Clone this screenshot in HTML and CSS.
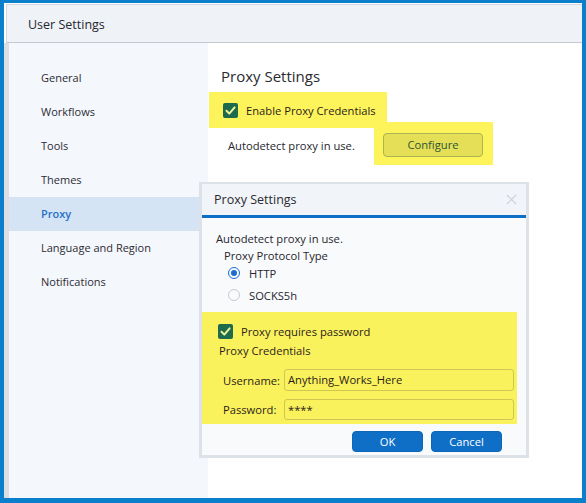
FILE: index.html
```html
<!DOCTYPE html>
<html>
<head>
    <title>User Settings</title>
    <link rel="stylesheet" href="styles.css">
</head>
<body>
    <div class="screen">
    <div class="window">
        <div class="titlebar">User Settings</div>
        <div class="content">
            <div class="sidebar">
                <div class="nav-item">General</div>
                <div class="nav-item">Workflows</div>
                <div class="nav-item">Tools</div>
                <div class="nav-item">Themes</div>
                <div class="nav-item selected">Proxy</div>
                <div class="nav-item">Language and Region</div>
                <div class="nav-item">Notifications</div>
            </div>
            <div class="panel">
                <div class="panel-title">Proxy Settings</div>
                <div class="mark enable-row">
                    <span class="check"><svg width="15" height="15" viewBox="0 0 15 15"><path d="M3.5 7.8 L6.3 10.6 L11.6 4.4" fill="none" stroke="#eef39a" stroke-width="2" stroke-linecap="round" stroke-linejoin="round"/></svg></span>
                    Enable Proxy Credentials
                </div>
                <div class="detect-row">
                    <span class="detect-text">Autodetect proxy in use.</span>
                    <div class="mark configure-wrap">
                        <div class="configure">Configure</div>
                    </div>
                </div>
            </div>
        </div>

        <!-- dialog sits over the settings window -->
        <div class="dialog">
            <div class="dialog-head">
                <span>Proxy Settings</span>
                <svg class="close" width="11" height="11" viewBox="0 0 11 11"><path d="M1 1 L10 10 M10 1 L1 10" stroke="#cdd1d9" stroke-width="1.2"/></svg>
            </div>
            <div class="dialog-bar"></div>
            <div class="dialog-body">
                <div class="line">Autodetect proxy in use.</div>
                <div class="line sub">Proxy Protocol Type</div>
                <div class="radio-row first"><span class="radio on"></span>HTTP</div>
                <div class="radio-row"><span class="radio"></span>SOCKS5h</div>

                <div class="mark creds">
                    <div class="pw-row">
                        <span class="check"><svg width="15" height="15" viewBox="0 0 15 15"><path d="M3.5 7.8 L6.3 10.6 L11.6 4.4" fill="none" stroke="#eef39a" stroke-width="2" stroke-linecap="round" stroke-linejoin="round"/></svg></span>
                        Proxy requires password
                    </div>
                    <div class="line creds-title">Proxy Credentials</div>
                    <div class="field first">
                        <span class="field-label">Username:</span>
                        <div class="input">Anything_Works_Here</div>
                    </div>
                    <div class="field">
                        <span class="field-label">Password:</span>
                        <div class="input pass">****</div>
                    </div>
                </div>

                <div class="buttons">
                    <div class="btn">OK</div>
                    <div class="btn">Cancel</div>
                </div>
            </div>
        </div>
    </div>
    </div>
</body>
</html>
```

FILE: styles.css
```css
body {
    margin: 0;
    font-family: "Open Sans", "Noto Sans", sans-serif;
    color: #26262e;
}
.screen {
    background-color: #0a7fcc;
    padding: 3px 4px 5px 4px;
    width: 578px;
    height: 495px;
}
.window {
    position: relative;
    height: 495px;
    background-color: #fff;
    padding-top: 1px;
    box-sizing: border-box;
    display: flex;
    flex-direction: column;
}
.titlebar {
    margin-left: 2px;
    height: 37px;
    border-top: 1px solid #d3d6dd;
    border-bottom: 1px solid #c6c9d0;
    border-left: 1px solid #d3d6dd;
    background-color: #eff2f7;
    font-size: 12.5px;
    line-height: 40px;
    padding-left: 21px;
}
.content {
    flex: 1;
    display: flex;
    border-left: 5px solid #dcdee3;
}
.sidebar {
    width: 199px;
    background-color: #f4f7fb;
    padding-top: 18px;
}
.nav-item {
    height: 34px;
    line-height: 34px;
    padding-left: 32px;
    font-size: 11px;
    color: #2c2c36;
}
.nav-item.selected {
    background-color: #d4e4f4;
    color: #2670c9;
    font-weight: 600;
}
.panel {
    flex: 1;
    margin-right: 1px;
    background-color: #fff;
}
.panel-title {
    font-size: 15px;
    margin: 22px 0 0 13px;
    line-height: 22px;
    height: 27px;
    color: #2a2a30;
}
.mark {
    background-color: #fdf35b;
}
.enable-row {
    margin-left: 1px;
    width: 164px;
    height: 36px;
    padding-left: 14px;
    display: flex;
    align-items: center;
    font-size: 11.2px;
    color: #2b1c1c;
}
.check {
    display: inline-block;
    width: 15px;
    height: 15px;
    background-color: #1d6a4c;
    border-radius: 2px;
    margin-right: 8px;
}
.check svg {
    display: block;
}
.detect-row {
    display: flex;
    align-items: center;
    margin-top: -6px;
    margin-left: 20px;
}
.detect-text {
    width: 146px;
    font-size: 11.2px;
    padding-top: 4px;
}
.configure-wrap {
    padding: 11px 10px 8px 9px;
}
.configure {
    width: 98px;
    height: 22px;
    line-height: 22px;
    text-align: center;
    background-color: #e5df57;
    border: 1px solid #aab451;
    border-radius: 4px;
    font-size: 11.2px;
    color: #2a5536;
}

/* dialog */
.dialog {
    position: absolute;
    left: 195px;
    top: 179px;
    width: 324px;
    height: 271px;
    border: 3px solid #dde1e8;
    border-top-width: 2px;
    background-color: #f9fafc;
}
.dialog-head {
    height: 31px;
    background-color: #f1f4f8;
    display: flex;
    align-items: center;
    justify-content: space-between;
    padding: 0 12px 0 12px;
    font-size: 12.5px;
    color: #2a2a30;
}
.close {
    margin-right: -3px;
}
.dialog-bar {
    height: 3px;
    background-color: #0e6fc7;
}
.dialog-body {
    padding-top: 13px;
    font-size: 11.2px;
}
.line {
    height: 16px;
    line-height: 16px;
    padding-left: 14px;
}
.sub {
    margin-top: 1px;
    padding-left: 22px;
}
.radio-row {
    display: flex;
    align-items: center;
    height: 22px;
    padding-left: 26px;
}
.radio-row.first {
    margin-top: -2px;
}
.radio {
    width: 10px;
    height: 10px;
    border: 1.5px solid #c5cad4;
    border-radius: 50%;
    margin-right: 9px;
    position: relative;
}
.radio.on {
    border-color: #1b6fd0;
}
.radio.on::after {
    content: "";
    position: absolute;
    left: 2px;
    top: 2px;
    width: 6px;
    height: 6px;
    border-radius: 50%;
    background-color: #1b6fd0;
}
.creds {
    margin-top: 6px;
    width: 315px;
    padding: 10px 0 4px 0;
    background-color: #faf25c;
    color: #2b1c1c;
}
.pw-row {
    display: flex;
    align-items: center;
    height: 18px;
    padding-left: 16px;
}
.creds-title {
    margin-top: 3px;
    padding-left: 17px;
}
.field {
    display: flex;
    align-items: center;
    margin-top: 8px;
    padding-left: 21px;
}
.field.first {
    margin-top: 10px;
}
.field-label {
    width: 61px;
}
.input {
    width: 225px;
    height: 20px;
    line-height: 20px;
    padding-left: 3px;
    border: 1px solid #cfc653;
    border-radius: 3px;
}
.input.pass {
    height: 19px;
    line-height: 19px;
}
.buttons {
    display: flex;
    justify-content: flex-end;
    gap: 8px;
    margin-top: 7px;
    padding-right: 24px;
}
.btn {
    width: 69px;
    height: 19px;
    line-height: 19px;
    text-align: center;
    background-color: #0f6fc6;
    border: 1px solid #0d66b8;
    border-radius: 4px;
    color: #fff;
}
```
